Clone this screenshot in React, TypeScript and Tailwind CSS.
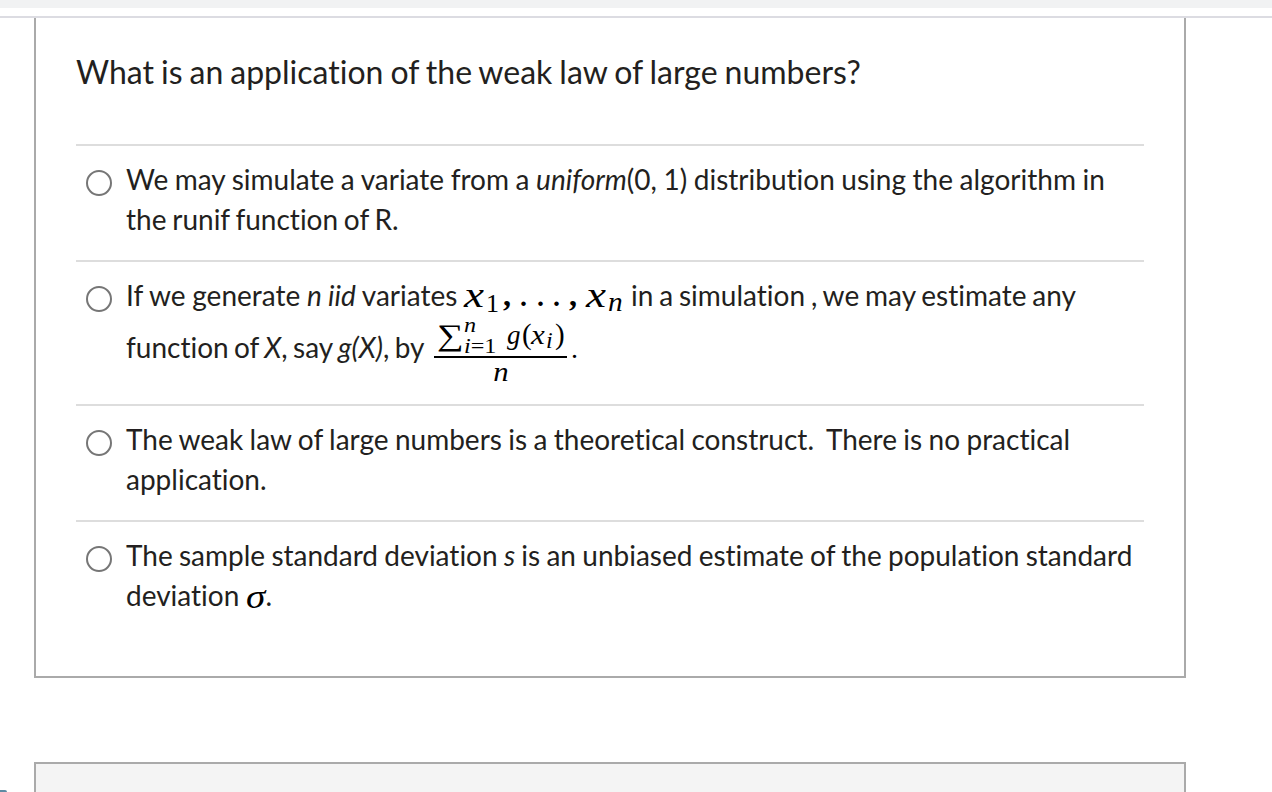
import type { ReactNode } from 'react';
import clsx from 'clsx';

interface GlyphProps {
  className: string;
  italic?: boolean;
  children: ReactNode;
}

// One symbol of a formula, in a slot of fixed width
const Glyph = ({ className, italic = false, children }: GlyphProps) => (
  <span
    className={clsx(
      "inline-block whitespace-nowrap font-['Liberation_Serif',serif] leading-none text-black",
      italic && 'italic',
      className
    )}
  >
    {children}
  </span>
);

const SampleVariables = () => (
  <span className="inline-flex h-10 w-[167px] shrink-0 items-baseline">
    <Glyph italic className="w-[22px] translate-y-px text-[36px]"><span className="inline-block origin-left scale-x-125">x</span></Glyph>
    <Glyph className="w-[17px] translate-y-[6px] text-[26px]">1</Glyph>
    <Glyph className="w-[17px] text-[32px] font-bold">,</Glyph>
    <Glyph className="w-[17px] text-[28px] font-bold">.</Glyph>
    <Glyph className="w-[16px] text-[28px] font-bold">.</Glyph>
    <Glyph className="w-[16px] text-[28px] font-bold">.</Glyph>
    <Glyph className="w-[17px] text-[32px] font-bold">,</Glyph>
    <Glyph italic className="w-[22px] translate-y-px text-[36px]"><span className="inline-block origin-left scale-x-125">x</span></Glyph>
    <Glyph italic className="translate-y-[5px] text-[28px]"><span className="inline-block origin-left scale-x-105">n</span></Glyph>
  </span>
);

const SampleMean = () => (
  <span className="inline-flex w-[133px] shrink-0 flex-col">
    <span className="flex h-[43px] items-start border-b-2 border-black pl-[3px]">
      <Glyph className="w-[27px] pt-[5px] text-[30px]"><span className="inline-block origin-left scale-x-125">∑</span></Glyph>
      <span className="flex w-[43px] flex-col">
        <Glyph italic className="text-[21px]"><span className="inline-block origin-left scale-x-115">n</span></Glyph>
        <Glyph className="text-[21px]"><span className="inline-block origin-left scale-x-115"><i>i</i>=1</span></Glyph>
      </span>
      <Glyph italic className="w-[15px] pt-[7px] text-[27px]">g</Glyph>
      <Glyph className="w-[9px] pt-[5px] text-[29px]">(</Glyph>
      <Glyph italic className="w-[15px] pt-[7px] text-[27px]"><span className="inline-block origin-left scale-x-115">x</span></Glyph>
      <Glyph italic className="w-[9px] pt-[13px] text-[24px]">i</Glyph>
      <Glyph className="w-[10px] pt-[5px] text-[29px]">)</Glyph>
    </span>
    <span className="flex h-[30px] justify-center">
      <Glyph italic className="text-[28px]"><span className="inline-block scale-x-110">n</span></Glyph>
    </span>
  </span>
);

const Answer = ({ children }: { children: ReactNode }) => (
  <label className="flex border-t-2 border-[#dddddd] pb-[21px] pl-[10px] pt-[13px]">
    <input
      type="radio"
      name="answer"
      className="mr-[14px] mt-[11px] size-[26px] shrink-0 appearance-none rounded-full border-2 border-[#767676] bg-white"
    />
    <span className="whitespace-pre text-[28px] leading-10 [word-spacing:-0.9px]">{children}</span>
  </label>
);

export default function App() {
  return (
    <div className="flex h-[792px] flex-col overflow-hidden bg-white font-['Lato',sans-serif] text-[#231f20] [font-variant-ligatures:none]">
      <div className="h-2 shrink-0 bg-[#f1f2f3]" />
      <div className="h-2 shrink-0" />
      <div className="h-0.5 shrink-0 bg-[#dcdce2]" />

      <section className="ml-[34px] h-[660px] w-[1152px] shrink-0 border-2 border-t-0 border-[#aaaaaa] px-10">
        <h2 className="h-[126px] pt-[30px] text-[32px] leading-[48px] whitespace-nowrap [word-spacing:-1.2px]">
          What is an application of the weak law of large numbers?
        </h2>

        <Answer>
          <span className="[word-spacing:-0.6px]">We may simulate a variate from a <i>uniform</i>(0, 1) distribution using the algorithm in</span><br />
          <span className="[word-spacing:-1.4px]">the runif function of R.</span>
        </Answer>
        <Answer>
          <span className="flex h-10 items-baseline">
            <span className="w-[338px] shrink-0 [word-spacing:-0.4px]">If we generate <i>n iid</i> variates</span>
            <SampleVariables />
            <span className="[word-spacing:-1.3px]">in a simulation , we may estimate any</span>
          </span>
          <span className="flex h-[68px]">
            <span className="w-[308px] shrink-0 pt-3 [word-spacing:-1.8px]">function of <i>X</i>, say <i>g(X)</i>, by</span>
            <SampleMean />
            <Glyph className="pl-[4px] pt-[20px] text-[28px]">.</Glyph>
          </span>
        </Answer>
        <Answer>
          <span className="[word-spacing:-0.8px]">The weak law of large numbers is a theoretical construct.  There is no practical</span><br />
          application.
        </Answer>
        <Answer>
          The sample standard deviation <i>s</i> is an unbiased estimate of the population standard<br />
          deviation <Glyph italic className="w-[20px] translate-y-[2px] text-[34px]"><span className="inline-block origin-left scale-x-115">σ</span></Glyph>.
        </Answer>
      </section>

      <div className="mt-[84px] flex h-[30px] shrink-0 items-end">
        <div className="h-0.5 w-[34px] shrink-0">
          <div className="h-full w-[7px] rounded-tr-sm bg-[#5d8ba3]" />
        </div>
        <div className="h-[30px] w-[1152px] border-2 border-b-0 border-[#aaaaaa] bg-[#f4f4f4]" />
      </div>
    </div>
  );
}
